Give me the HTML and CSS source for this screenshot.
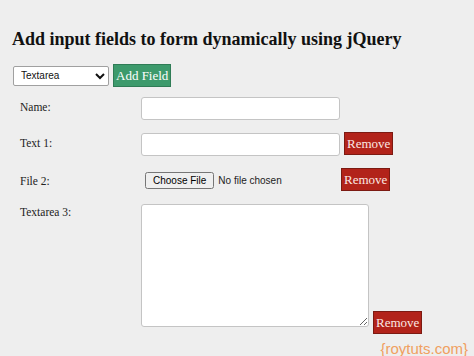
FILE: index.html
```html
<!DOCTYPE html>
<html lang="en">
<head>
    <meta charset="UTF-8">
    <title>Add input fields to form dynamically using jQuery</title>
    <link rel="stylesheet" href="styles.css">
</head>
<body>
    <h2>Add input fields to form dynamically using jQuery</h2>

    <!-- Choose field type and add it -->
    <div class="toolbar">
        <select class="type-select">
            <option>Textarea</option>
            <option>Text</option>
            <option>File</option>
        </select>
        <button class="btn-add">Add Field</button>
    </div>

    <form class="fields">
        <div class="row">
            <label>Name:</label>
            <input type="text" class="text-input">
        </div>

        <div class="row">
            <label>Text 1:</label>
            <input type="text" class="text-input">
            <button type="button" class="btn-remove">Remove</button>
        </div>

        <div class="row row-file">
            <label>File 2:</label>
            <input type="file" class="file-input">
            <button type="button" class="btn-remove">Remove</button>
        </div>

        <div class="row row-area">
            <label>Textarea 3:</label>
            <textarea class="area-input"></textarea>
            <button type="button" class="btn-remove">Remove</button>
        </div>
    </form>

    <div class="watermark">{roytuts.com}</div>
</body>
</html>
```

FILE: styles.css
```css
/* Base styles */
body {
    margin: 0;
    padding: 12px 12px 0 12px;
    background-color: #eeeeee;
    font-family: "Liberation Serif", "Times New Roman", serif;
    font-size: 11.5px;
    color: #222;
}
h2 {
    margin: 15px 0 13px 0;
    font-size: 18px;
    line-height: 24px;
    font-weight: bold;
    color: #111;
}
.toolbar {
    display: flex;
    align-items: center;
    gap: 4px;
    margin-left: 1px;
}
.type-select {
    width: 96px;
    height: 20px;
    font-family: "Liberation Sans", Arial, sans-serif;
    font-size: 10px;
    background: #fff;
    border: 1px solid #a0a0a0;
    border-radius: 2px;
    padding: 0 3px;
    color: #111;
}
.btn-add {
    height: 23px;
    padding: 0 2px;
    background: #3d9a6c;
    border: 1px solid #2f7c56;
    color: #fff;
    font-family: "Liberation Serif", "Times New Roman", serif;
    font-size: 13px;
}
.fields {
    margin: 10px 0 0 8px;
}
.row {
    display: flex;
    align-items: flex-start;
    margin-bottom: 13px;
}
.row label {
    width: 121px;
    padding-top: 3px;
    line-height: 14px;
}
.text-input {
    box-sizing: border-box;
    width: 199px;
    height: 23px;
    margin: 0;
    border: 1px solid #c4c4c4;
    border-radius: 3px;
    background: #fff;
}
.btn-remove {
    height: 23px;
    margin-left: 4px;
    margin-top: -1px;
    padding: 0 2px;
    background: #b2231a;
    border: 1px solid #7c1a12;
    color: #fbe9e4;
    font-family: "Liberation Serif", "Times New Roman", serif;
    font-size: 13px;
}
.row-file label {
    padding-top: 5px;
}
.row-file .file-input {
    width: 192px;
    margin: 3px 0 0 4px;
    font-family: "Liberation Sans", Arial, sans-serif;
    font-size: 10px;
}
.area-input {
    box-sizing: border-box;
    width: 228px;
    height: 123px;
    margin: 0;
    border: 1px solid #c4c4c4;
    border-radius: 3px;
    background: #fff;
}
.row-area label {
    padding-top: 1px;
}
.row-area .btn-remove {
    margin: 107px 0 0 4px;
}
.watermark {
    position: absolute;
    right: 6px;
    bottom: -1px;
    font-family: "Liberation Sans", Arial, sans-serif;
    font-size: 15px;
    color: #f0a060;
}
```
